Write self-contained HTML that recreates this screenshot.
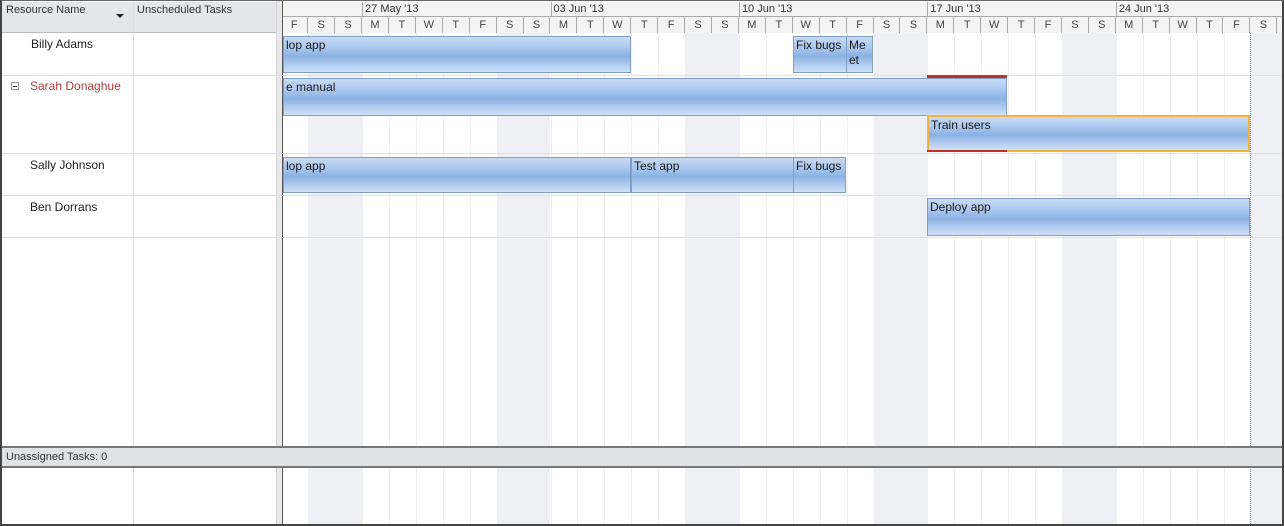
<!DOCTYPE html>
<html><head><meta charset="utf-8"><style>
*{margin:0;padding:0;box-sizing:border-box}
body{width:1284px;height:526px;background:#fff;font-family:"Liberation Sans",sans-serif;font-size:11px;color:#222;position:relative;overflow:hidden}
.a{position:absolute}
.bar{position:absolute;border:1px solid #7f9fc8;background:linear-gradient(#c9dbf2 0%,#aac7ee 30%,#8ab2e3 55%,#b3cdef 80%,#cfe0f5 100%);padding:1px 2px;font-size:12px;color:#1a1a1a;line-height:15px;overflow:hidden}
.hd{position:absolute;font-size:11px;color:#333}
.nm{position:absolute;font-size:12px}
</style></head><body>
<div id="g"></div>
<script>
var g=document.getElementById('g'),h='';
var x0=281.3,w=26.92,L='FSSMTWT';
for(var i=0;i<38;i++){var x=x0+i*w,d=L[i%7];
 if(i%7==1||i%7==2){h+='<div class="a" style="left:'+x+'px;top:33px;width:'+w+'px;height:414px;background:#eef0f6"></div>';
 h+='<div class="a" style="left:'+x+'px;top:468px;width:'+w+'px;height:58px;background:#eef0f6"></div>';}
 h+='<div class="a" style="left:'+(x+w)+'px;top:33px;width:1px;height:414px;background:#f0f0f0"></div>';
 h+='<div class="a" style="left:'+(x+w)+'px;top:468px;width:1px;height:58px;background:#f0f0f0"></div>';
 h+='<div class="a" style="left:'+x+'px;top:17px;width:'+w+'px;height:16px;background:#f3f3f3;border-right:1px solid #aaa;text-align:center;font-size:11px;line-height:16px;color:#444">'+d+'</div>';
}
var wk=['27 May \'13','03 Jun \'13','10 Jun \'13','17 Jun \'13','24 Jun \'13'];
h+='<div class="a" style="left:283px;top:2px;width:1000px;height:15px;background:#f3f3f3;border-bottom:1px solid #aaa"></div>';
for(var k=0;k<5;k++){var x=x0+(3+7*k)*w;h+='<div class="a" style="left:'+x+'px;top:2px;height:15px;border-left:1px solid #aaa;padding-left:2px;font-size:11px;line-height:15px;color:#333">'+wk[k]+'</div>';}
g.innerHTML=h;
</script>
<div class="a" style="left:0;top:0;width:283px;height:526px;background:#fff"></div>
<div class="a" style="left:2px;top:2px;width:274px;height:31px;background:#e4e6e9;border-bottom:1px solid #bbb"></div>
<div class="hd" style="left:6px;top:4px">Resource Name</div>
<div class="a" style="left:116px;top:14px;width:0;height:0;border-left:4px solid transparent;border-right:4px solid transparent;border-top:4px solid #222"></div>
<div class="a" style="left:133px;top:2px;width:1px;height:524px;background:#ddd"></div>
<div class="hd" style="left:137px;top:4px">Unscheduled Tasks</div>
<div class="a" style="left:276px;top:0;width:6px;height:526px;background:#e8e8e8;border-left:1px solid #d4d4d4"></div>
<div class="a" style="left:282px;top:0;width:1px;height:526px;background:#555"></div>
<div class="a" style="left:2px;top:75px;width:1282px;height:1px;background:#e0e0e0"></div>
<div class="a" style="left:2px;top:153px;width:1282px;height:1px;background:#e0e0e0"></div>
<div class="a" style="left:2px;top:195px;width:1282px;height:1px;background:#e0e0e0"></div>
<div class="a" style="left:2px;top:237px;width:1282px;height:1px;background:#e0e0e0"></div>
<div class="nm" style="left:31px;top:37px">Billy Adams</div>
<div class="a" style="left:11px;top:82px;width:8px;height:8px;border:1px solid #999;background:#fff"></div>
<div class="a" style="left:13px;top:86px;width:4px;height:1px;background:#333"></div>
<div class="nm" style="left:30px;top:79px;color:#b43a3a">Sarah Donaghue</div>
<div class="nm" style="left:30px;top:158px">Sally Johnson</div>
<div class="nm" style="left:30px;top:200px">Ben Dorrans</div>
<div class="bar" style="left:283px;top:36px;width:348px;height:37px">lop app</div>
<div class="bar" style="left:793px;top:36px;width:54px;height:37px">Fix bugs</div>
<div class="bar" style="left:846px;top:36px;width:27px;height:37px">Me<br>et</div>
<div class="a" style="left:927px;top:75px;width:80px;height:3px;background:#c0312b"></div>
<div class="bar" style="left:283px;top:78px;width:724px;height:38px">e manual</div>
<div class="bar" style="left:927px;top:115px;width:323px;height:37px;border:2px solid #f0b43c">Train users</div>
<div class="a" style="left:927px;top:150px;width:80px;height:2px;background:#c0312b"></div>
<div class="bar" style="left:283px;top:157px;width:348px;height:36px">lop app</div>
<div class="bar" style="left:631px;top:157px;width:163px;height:36px">Test app</div>
<div class="bar" style="left:793px;top:157px;width:53px;height:36px">Fix bugs</div>
<div class="bar" style="left:927px;top:198px;width:323px;height:38px">Deploy app</div>
<div class="a" style="left:1250px;top:33px;width:0;height:493px;border-left:1px dotted #999"></div>
<div class="a" style="left:0;top:446px;width:1284px;height:22px;background:#dfe2e6;border-top:2px solid #777;border-bottom:2px solid #777"></div>
<div class="a" style="left:6px;top:451px;font-size:11px;color:#333">Unassigned Tasks: 0</div>
<div class="a" style="left:0;top:0;width:1284px;height:526px;border:2px solid #444;border-top:1px solid #666"></div>
</body></html>
